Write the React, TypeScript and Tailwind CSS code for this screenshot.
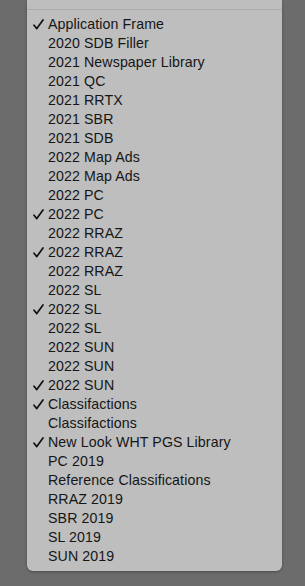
import React from "react";

const items: { label: string; checked?: boolean }[] = [
  { label: "Application Frame", checked: true },
  { label: "2020 SDB Filler" },
  { label: "2021 Newspaper Library" },
  { label: "2021 QC" },
  { label: "2021 RRTX" },
  { label: "2021 SBR" },
  { label: "2021 SDB" },
  { label: "2022 Map Ads" },
  { label: "2022 Map Ads" },
  { label: "2022 PC" },
  { label: "2022 PC", checked: true },
  { label: "2022 RRAZ" },
  { label: "2022 RRAZ", checked: true },
  { label: "2022 RRAZ" },
  { label: "2022 SL" },
  { label: "2022 SL", checked: true },
  { label: "2022 SL" },
  { label: "2022 SUN" },
  { label: "2022 SUN" },
  { label: "2022 SUN", checked: true },
  { label: "Classifactions", checked: true },
  { label: "Classifactions" },
  { label: "New Look WHT PGS Library", checked: true },
  { label: "PC 2019" },
  { label: "Reference Classifications" },
  { label: "RRAZ 2019" },
  { label: "SBR 2019" },
  { label: "SL 2019" },
  { label: "SUN 2019" },
];

const Check = () => (
  <svg width="11" height="11" viewBox="0 0 11 11" className="shrink-0">
    <path d="M1 6.2 L3.8 9.6 L10 1" fill="none" stroke="#111" strokeWidth="1.7" strokeLinecap="round" strokeLinejoin="round" />
  </svg>
);

export default function App() {
  return (
    <div className="w-[305px] h-[586px] bg-[#6c6c6c] overflow-hidden font-['Liberation_Sans',Arial,sans-serif]">
      <div className="ml-[27px] w-[255px] h-[571px] bg-[#bebebe] rounded-b-[6px] shadow-[0_1px_3px_rgba(0,0,0,0.3)] flex flex-col">
        <div className="h-[9px]" />
        <div className="h-px bg-[#acacac]" />
        <div className="pt-[5px] flex flex-col">
          {items.map((item, i) => (
            <div key={i} className="h-[19px] flex items-center text-[14.2px] tracking-[0.1px] text-[#161616] leading-none">
              <div className="w-[21px] pl-[6px] flex items-center">
                {item.checked && <Check />}
              </div>
              <span>{item.label}</span>
            </div>
          ))}
        </div>
      </div>
    </div>
  );
}
